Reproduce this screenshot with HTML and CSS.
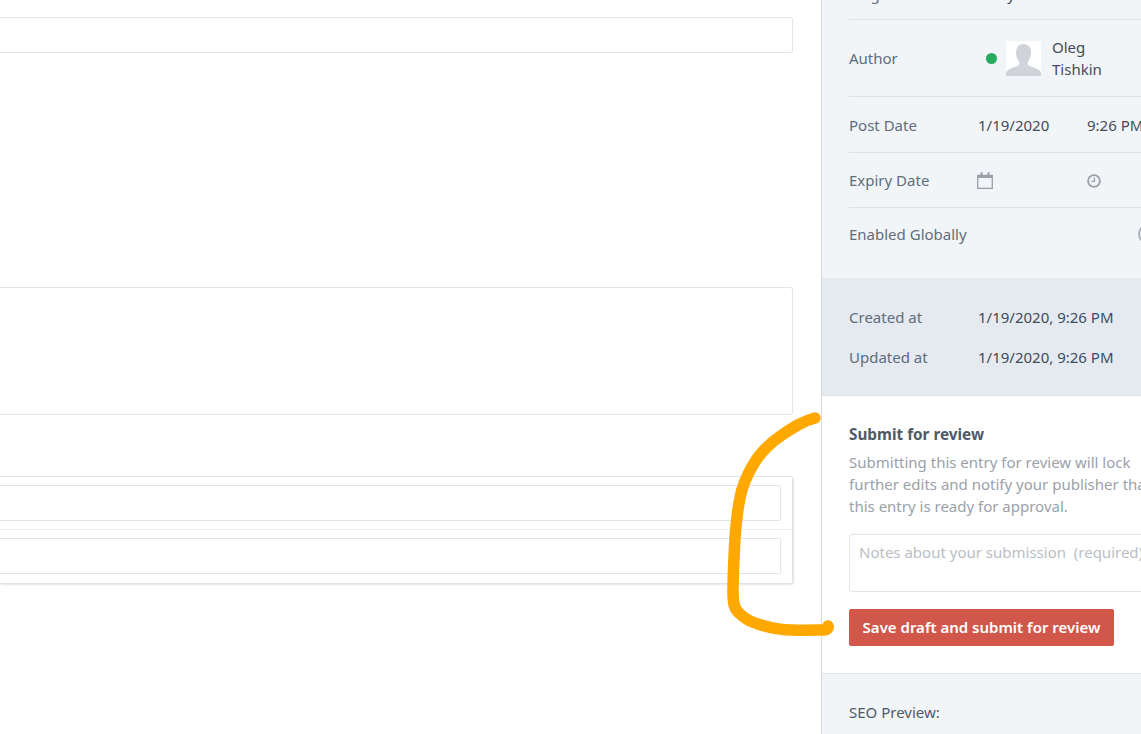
FILE: index.html
```html
<!DOCTYPE html>
<html lang="en">
<head>
<meta charset="utf-8">
<title>Submit for review</title>
<link rel="stylesheet" href="styles.css">
</head>
<body>
<div class="page">
  <main class="content">
    <div class="field field-title"></div>
    <div class="field field-body"></div>
    <div class="matrix">
      <div class="matrix-row"><div class="matrix-input"></div></div>
      <div class="matrix-row matrix-row-last"><div class="matrix-input"></div></div>
    </div>
  </main>
  <aside class="sidebar">
    <section class="meta">
      <div class="row row-clip"><span class="label">Slug</span><span class="value">Entry</span></div>
      <div class="row row-author">
        <span class="label">Author</span>
        <div class="author">
          <span class="status"></span>
          <svg class="avatar" viewBox="0 0 35 35" aria-hidden="true">
            <rect width="35" height="35" fill="#fff"/>
            <path d="M17.500 3c-5 0-7.500 3.500-7.500 8.500 0 3.500 1.300 7 3.300 9.500v3c-3 1.800-8 2.500-11.300 5-1 .800-2 2-2 3v3.500h35v-3.500c0-1-1-2.200-2-3-3.300-2.500-8.300-3.200-11.300-5v-3c2-2.500 3.300-6 3.300-9.500 0-5-2.500-8.500-7.500-8.500z" fill="#d0d4da"/>
          </svg>
          <span class="author-name">Oleg<br>Tishkin</span>
        </div>
      </div>
      <div class="row row-post">
        <span class="label">Post Date</span>
        <span class="value date">1/19/2020</span>
        <span class="value">9:26 PM</span>
      </div>
      <div class="row row-expiry">
        <span class="label">Expiry Date</span>
        <span class="date icon-cell">
          <svg class="icon icon-calendar" width="16" height="17" viewBox="0 0 16 17" aria-hidden="true">
            <path d="M.700 3.500h14.600v12.800h-14.600z" fill="none" stroke="#9aa0a8" stroke-width="1.300"/>
            <path d="M.700 3h14.600v3h-14.600z" fill="#9aa0a8"/>
            <path d="M4.500 1v3M11.500 1v3" stroke="#9aa0a8" stroke-width="2" stroke-linecap="round"/>
          </svg>
        </span>
        <span class="icon-cell">
          <svg class="icon icon-clock" width="14" height="14" viewBox="0 0 14 14" aria-hidden="true">
            <circle cx="7" cy="7" r="5.900" fill="none" stroke="#9aa0a8" stroke-width="1.800"/>
            <path d="M7.400 3.500v3.900h-3" fill="none" stroke="#9aa0a8" stroke-width="1.300"/>
          </svg>
        </span>
      </div>
      <div class="row row-enabled row-last">
        <span class="label">Enabled Globally</span>
        <span class="toggle"></span>
      </div>
    </section>
    <section class="timestamps">
      <div class="stamp"><span class="stamp-label">Created at</span><span class="value">1/19/2020, 9:26 PM</span></div>
      <div class="stamp"><span class="stamp-label">Updated at</span><span class="value">1/19/2020, 9:26 PM</span></div>
    </section>
    <section class="review">
      <h2 class="review-title">Submit for review</h2>
      <p class="review-text">Submitting this entry for review will lock further edits and notify your publisher that this entry is ready for approval.</p>
      <div class="notes">Notes about your submission&nbsp; (required)</div>
      <button class="submit" type="button">Save draft and submit for review</button>
    </section>
    <section class="seo">SEO Preview:</section>
  </aside>
  <svg class="scribble" width="1141" height="734" viewBox="0 0 1141 734" aria-hidden="true">
    <path d="M815 418C803 421 794 427 782 435C770 443 760 453 753 465C746 477 742 486 740 498C737 512 736 525 735 538C734 556 733 574 733 592C733 603 734 609 739 613C745 619 751 622 758 624C770 628 780 630 792 630C805 630.500 816 630 824 630C827 630 829 628 828 626" fill="none" stroke="#ffa900" stroke-width="11.500" stroke-linecap="round" stroke-linejoin="round"/>
  </svg>
</div>
</body>
</html>
```
FILE: styles.css
```css
* { box-sizing: border-box; }

html, body {
  margin: 0;
  height: 100%;
  overflow: hidden;
}

body {
  background: #fff;
  color: #3f4d5a;
  font-family: "Noto Sans", "Open Sans", sans-serif;
  font-size: 15px;
}

.page {
  position: relative;
  display: flex;
  width: 1141px;
  height: 734px;
  overflow: hidden;
}

.content {
  flex: 0 0 821px;
  padding: 17px 28px 0 0;
  display: flex;
  flex-direction: column;
}

.field {
  border: 1px solid #e3e5e8;
  border-left: 0;
  border-radius: 0 3px 3px 0;
}

.field-title { height: 36px; }

.field-body {
  height: 128px;
  margin-top: 234px;
}

.matrix {
  margin-top: 61px;
  height: 108px;
  border: 1px solid #dfe1e4;
  border-left: 0;
  border-radius: 0 3px 3px 0;
  box-shadow: 1px 1px 2px rgba(30, 40, 55, 0.12);
}

.matrix-row {
  height: 53px;
  padding: 8px 11px 0 0;
  border-bottom: 1px solid #e9ebed;
}

.matrix-row-last { border-bottom: 0; }

.matrix-input {
  height: 36px;
  border: 1px solid #e3e5e8;
  border-left: 0;
  border-radius: 0 2px 2px 0;
}

.sidebar {
  flex: 0 0 320px;
  display: flex;
  flex-direction: column;
  background: #f1f5f8;
  border-left: 1px solid #d6d9dd;
}

.meta {
  height: 278px;
  padding: 0 0 0 27px;
}

.row {
  display: flex;
  align-items: center;
  border-bottom: 1px solid #dde0e4;
  white-space: nowrap;
}

.row-clip {
  height: 20px;
  overflow: hidden;
  align-items: flex-end;
  padding-bottom: 15px;
}

.row-author { height: 77px; }
.row-post { height: 56px; padding-top: 1px; }
.row-expiry { height: 55px; }
.row-enabled { height: 54px; padding-bottom: 3px; }
.row-last { border-bottom: 0; }

.label {
  flex: 0 0 129px;
  color: #606d7b;
}

.value { color: #3f4d5a; }

.date { flex: 0 0 109px; }

.author {
  display: flex;
  align-items: center;
  margin-left: 8px;
}

.status {
  width: 11px;
  height: 11px;
  border-radius: 50%;
  background: #27ab5f;
}

.avatar {
  width: 35px;
  height: 35px;
  margin-left: 9px;
}

.author-name {
  margin-left: 11px;
  line-height: 22px;
  color: #3f4d5a;
}

.icon-cell {
  display: flex;
  align-items: center;
}

.icon { display: block; }

.icon-calendar { margin-left: -1px; }

.icon-clock { margin-top: 2px; }

.toggle {
  width: 34px;
  height: 20px;
  margin-left: 160px;
  flex: none;
  border: 2px solid #a8aeb6;
  border-radius: 10px;
}

.timestamps {
  height: 118px;
  padding: 19px 0 0 27px;
  background: #e4eaf0;
  border-bottom: 1px solid #dde0e4;
}

.stamp {
  display: flex;
  align-items: center;
  height: 40px;
  white-space: nowrap;
}

.stamp-label {
  flex: 0 0 129px;
  color: #606d7b;
}

.review {
  height: 278px;
  padding: 27px 0 0 27px;
  background: #fff;
  border-bottom: 1px solid #e3e6ea;
}

.review-title {
  margin: 0;
  font-size: 15.300px;
  line-height: 22px;
  font-weight: 700;
  color: #4f5a68;
}

.review-text {
  margin: 6px 0 0;
  width: 310px;
  line-height: 22px;
  color: #9aa1a9;
}

.notes {
  width: 320px;
  height: 58px;
  margin-top: 17px;
  padding: 6px 9px;
  border: 1px solid #e3e5e8;
  border-radius: 3px;
  line-height: 22px;
  color: #b9bec4;
  white-space: nowrap;
}

.submit {
  display: block;
  width: 265px;
  height: 37px;
  margin-top: 17px;
  padding: 0 0 2px;
  border: 0;
  border-radius: 2px;
  background: #d1574a;
  color: #fff;
  font: 600 15px "Noto Sans", "Open Sans", sans-serif;
}

.seo {
  flex: 1;
  padding: 28px 0 0 27px;
  line-height: 20px;
  color: #4f5a68;
}

.scribble {
  position: absolute;
  left: 0;
  top: 0;
  pointer-events: none;
}
```
